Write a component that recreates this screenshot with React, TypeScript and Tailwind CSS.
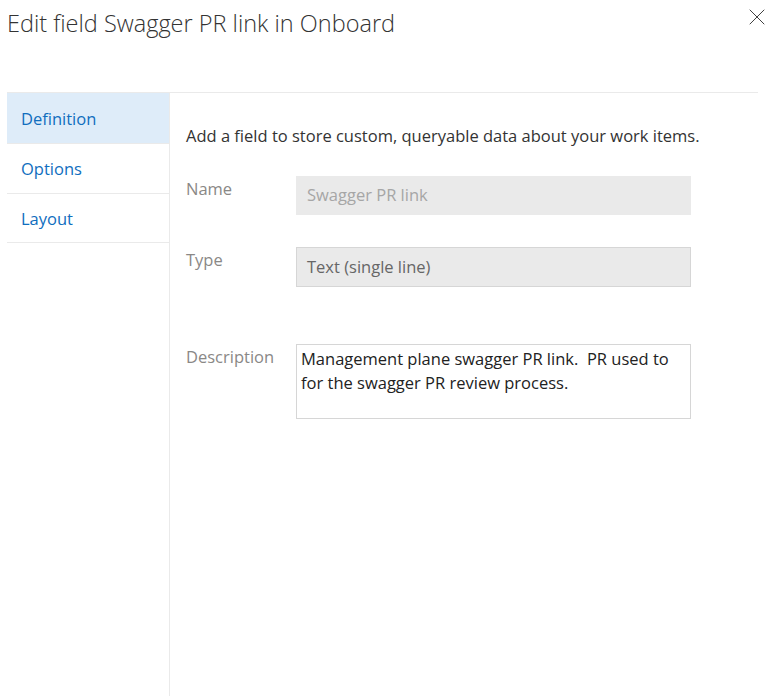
import { X } from 'lucide-react';

const tabs = ['Definition', 'Options', 'Layout'];

export default function App() {
  const active = 'Definition';

  return (
    <div className="relative h-[696px] w-[782px] overflow-hidden bg-white font-['Open_Sans',sans-serif] text-[#333]">
      {/* Header */}
      <div className="flex h-[92px] items-start justify-between pl-[7px] pr-[11px]">
        <h1 className="mt-[7px] text-[23.5px] font-light leading-[32px] text-[#333]">
          Edit field Swagger PR link in Onboard
        </h1>
        <button className="mt-[3px] text-[#333]">
          <X size={28} strokeWidth={0.8} />
        </button>
      </div>

      <div className="ml-[7px] mr-[24px] flex h-[604px] border-t border-[#eaeaea]">
        {/* Side nav */}
        <nav className="w-[163px] shrink-0 border-r border-[#eaeaea]">
          {tabs.map((tab) => (
            <div
              key={tab}
              className={
                tab === active
                  ? 'flex h-[50px] items-center bg-[#deecf9] pl-[14px] pt-[2px] text-[16.5px] text-[#106ebe]'
                  : 'flex h-[50px] items-center border-t border-[#eaeaea] pl-[14px] pt-[2px] text-[16.5px] text-[#106ebe] last:border-b'
              }
            >
              {tab}
            </div>
          ))}
        </nav>

        {/* Definition form */}
        <div className="flex-1 pl-[16px] pt-[31px]">
          <p className="text-[16.5px] leading-[24px] text-[#333]">
            Add a field to store custom, queryable data about your work items.
          </p>

          <div className="mt-[28px] flex items-start">
            <label className="w-[110px] pt-[1px] text-[16.5px] leading-[24px] text-[#8a8886]">Name</label>
            <div className="flex h-[39px] w-[395px] items-center bg-[#eaeaea] px-[11px] text-[16.5px] text-[#a6a6a6]">
              Swagger PR link
            </div>
          </div>

          <div className="mt-[32px] flex items-start">
            <label className="w-[110px] pt-[1px] text-[16.5px] leading-[24px] text-[#8a8886]">Type</label>
            <div className="flex h-[40px] w-[395px] items-center border border-[#d6d6d6] bg-[#eaeaea] px-[10px] text-[16.5px] text-[#666]">
              Text (single line)
            </div>
          </div>

          <div className="mt-[57px] flex items-start">
            <label className="w-[110px] pt-[1px] text-[16.5px] leading-[24px] text-[#8a8886]">Description</label>
            <div className="h-[75px] w-[395px] border border-[#d6d6d6] bg-white px-[4px] pt-[2px] text-[16.5px] leading-[24px] text-[#222]">
              Management plane swagger PR link.&nbsp; PR used to
              <br />
              for the swagger PR review process.
            </div>
          </div>
        </div>
      </div>
    </div>
  );
}
